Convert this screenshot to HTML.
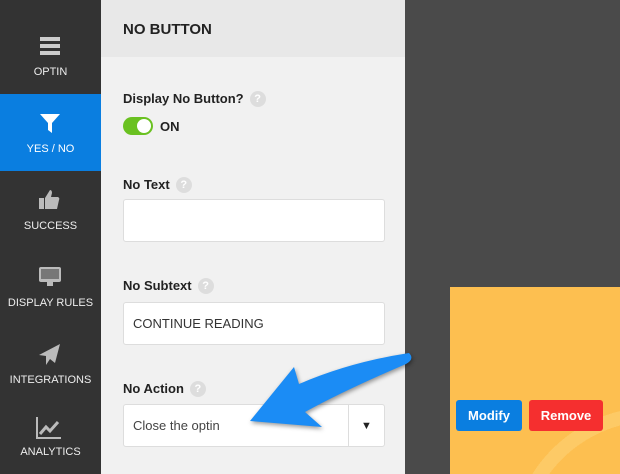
<!DOCTYPE html>
<html style="overflow:hidden;height:474px"><head><style>
body{margin:0;width:620px;height:474px;overflow:hidden;position:relative;background:#4a4a4a;font-family:"Liberation Sans",sans-serif}
.sb{position:absolute;left:0;top:0;width:101px;height:474px;background:#333}
.it{position:absolute;left:0;width:101px;height:77px;color:#eee;font-size:11px;text-align:center}
.it span{position:absolute;left:0;right:0;bottom:16px}
.act{background:#0a7ee0;color:#fff}
.panel{position:absolute;left:101px;top:0;width:304px;height:474px;background:#f1f1f1}
.hd{height:57px;background:#e8e8e8;font-weight:bold;font-size:15px;line-height:60px;padding-left:22px;color:#222}
.lb{position:absolute;left:22px;font-size:13px;font-weight:bold;color:#222}
.q{display:inline-block;width:16px;height:16px;border-radius:50%;background:#ddd;color:#fff;font-size:11px;text-align:center;line-height:16px;margin-left:6px;vertical-align:1px}
.in{position:absolute;left:22px;width:262px;height:43px;background:#fff;border:1px solid #ddd;border-radius:3px;font-size:13px;color:#333;line-height:42px;padding-left:9px;box-sizing:border-box}
.btn{position:absolute;top:400px;height:31px;border-radius:3px;color:#fff;font-weight:bold;font-size:13px;line-height:31px;text-align:center}
</style></head><body>
<div class="sb">
<div class="it" style="top:17px"><svg style="position:absolute;left:40px;top:20px" width="20" height="18"><rect y="0" width="20" height="4" fill="#ccc"/><rect y="7" width="20" height="4" fill="#ccc"/><rect y="14" width="20" height="4" fill="#ccc"/></svg><span>OPTIN</span></div>
<div class="it act" style="top:94px"><svg style="position:absolute;left:40px;top:20px" width="20" height="20"><path d="M0 0H20L12 9V19L8 16V9Z" fill="#fff"/></svg><span>YES / NO</span></div>
<div class="it" style="top:171px"><svg style="position:absolute;left:38px;top:18px" width="22" height="22"><rect x="1" y="9" width="5" height="11" fill="#bbb"/><path d="M7 9L12 1Q14 1 14 4L13 8H20Q22 9 21 11L19 20H7Z" fill="#bbb"/></svg><span>SUCCESS</span></div>
<div class="it" style="top:248px"><svg style="position:absolute;left:38px;top:18px" width="24" height="22"><rect x="1" y="1" width="22" height="15" rx="2" fill="#bbb"/><rect x="3" y="3" width="18" height="10" fill="#777"/><rect x="9" y="16" width="6" height="4" fill="#bbb"/></svg><span>DISPLAY RULES</span></div>
<div class="it" style="top:325px"><svg style="position:absolute;left:38px;top:18px" width="24" height="24"><path d="M22 1L1 12L8 13L8 22L12 16L17 20Z" fill="#bbb"/></svg><span>INTEGRATIONS</span></div>
<div class="it" style="top:397px"><svg style="position:absolute;left:36px;top:20px" width="26" height="22"><path d="M1 0V21H25" stroke="#bbb" stroke-width="2" fill="none"/><path d="M4 17L10 10L14 14L22 5" stroke="#bbb" stroke-width="3" fill="none"/></svg><span>ANALYTICS</span></div>
</div>
<div class="panel">
<div class="hd">NO BUTTON</div>
<div class="lb" style="top:91px">Display No Button?<span class="q">?</span></div>
<div style="position:absolute;left:22px;top:117px;width:30px;height:18px;border-radius:9px;background:#6ac121"><div style="position:absolute;right:2px;top:2px;width:14px;height:14px;border-radius:50%;background:#fff"></div></div>
<div class="lb" style="top:119px;left:59px">ON</div>
<div class="lb" style="top:177px">No Text<span class="q">?</span></div>
<div class="in" style="top:199px"></div>
<div class="lb" style="top:278px">No Subtext<span class="q">?</span></div>
<div class="in" style="top:302px">CONTINUE READING</div>
<div class="lb" style="top:381px">No Action<span class="q">?</span></div>
<div class="in" style="top:404px;color:#444">Close the optin<div style="position:absolute;right:0;top:0;width:35px;height:41px;border-left:1px solid #ddd;text-align:center;font-size:11px;color:#222">▼</div></div>
</div>
<div style="position:absolute;left:450px;top:287px;width:170px;height:187px;background:radial-gradient(circle at 204px 264px,#fdbf50 0,#fdbf50 130px,#fdca66 130px,#fdca66 144px,#fdbf50 144px)"></div>
<div class="btn" style="left:456px;width:66px;background:#0a7ee0">Modify</div>
<div class="btn" style="left:529px;width:74px;background:#f52f2f">Remove</div>
<svg style="position:absolute;left:0;top:0;display:block" width="620" height="474"><path d="M409 353Q415 359 406 364Q345 390 305 412L322 427L250 421L294 367L299 384Q350 362 409 353Z" fill="#1b8cf5" style="filter:drop-shadow(1px 2px 2px rgba(0,0,0,.4))"/></svg>
</body></html>
